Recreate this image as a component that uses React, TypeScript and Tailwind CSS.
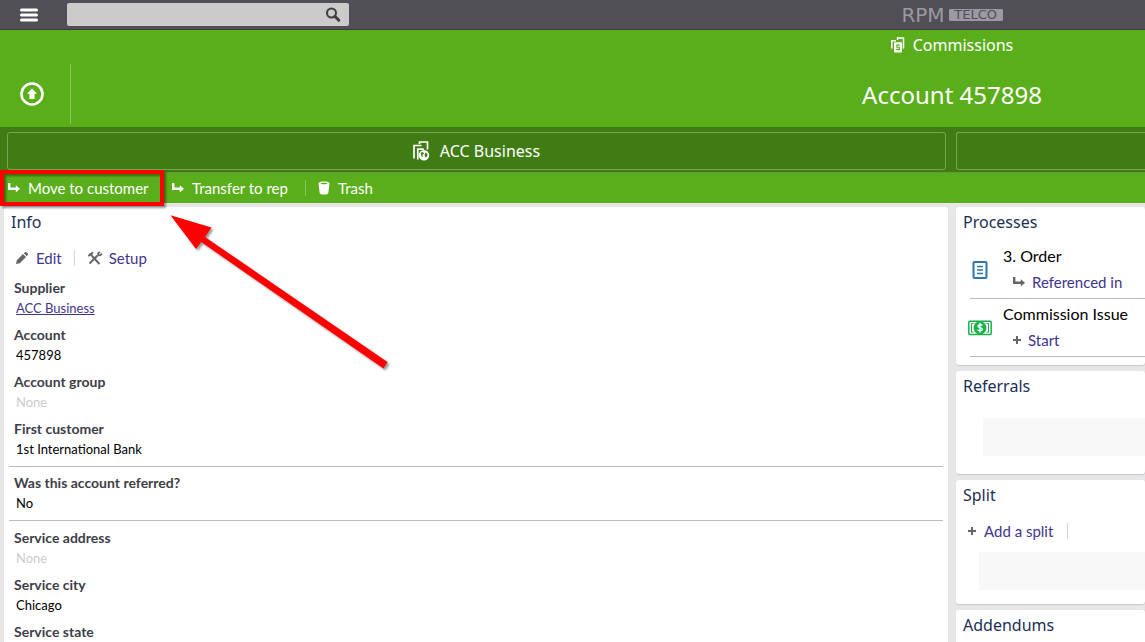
import type { ReactNode } from 'react';

const MenuIcon = () => (
	<svg viewBox="0 0 18 14" className="h-3.5 w-4.5" stroke="currentColor" strokeWidth="3" strokeLinecap="round">
		<path d="M1.5 2h15M1.5 7h15M1.5 12h15" />
	</svg>
);

const SearchIcon = () => (
	<svg viewBox="0 0 16 16" className="size-4" fill="none" stroke="currentColor">
		<circle cx="6.5" cy="6" r="4.5" strokeWidth="2" />
		<path d="M9.8 9.3l4 4" strokeWidth="3" strokeLinecap="round" />
	</svg>
);

const UpIcon = () => (
	<svg viewBox="0 0 24 24" className="size-6">
		<circle cx="12" cy="12" r="10.5" fill="none" stroke="currentColor" strokeWidth="2.6" />
		<path d="M12 6.5l5 5.2h-2.4V17H9.4v-5.3H7z" fill="currentColor" />
	</svg>
);

const CommissionsIcon = () => (
	<svg viewBox="0 0 14 16" className="h-4 w-3.5" fill="none" stroke="currentColor" strokeWidth="1.5">
		<path d="M.8 11.5V3.7H5M6.5 3V1h6v10.5" />
		<rect x="3" y="5.2" width="8" height="10.3" rx="1" fill="currentColor" stroke="none" />
		<path d="M8.8 8.2H5.8v2h2.6v2.2H5.2M7 7v1M7 12.5v1" className="stroke-[#5bae1b]" strokeWidth="1.1" />
	</svg>
);

const SupplierIcon = () => (
	<svg viewBox="0 0 17 20" className="h-5 w-[17px]" fill="none" stroke="currentColor" strokeWidth="1.7">
		<path d="M1 17.5V4.5h7.5M4.8 18.5V8.2h6M6.5 3V1h8v7.5" />
		<circle cx="11" cy="14.3" r="5.2" fill="currentColor" stroke="none" />
		<path d="M7.800 11.800l2.200-.8 1 1.700-1.600 1 .4 2.300-1.500-.8zM12.600 11.400l1.900 1.600-.6 2.700-1.700.6-.6-2.400z" className="fill-[#407b13]" stroke="none" />
	</svg>
);

const MoveIcon = () => (
	<svg viewBox="0 0 12 10" className="h-2.5 w-3 shrink-0" fill="currentColor">
		<path d="M0 0h2.4v4.6h5.4V2.2L12 5.8 7.8 9.4V7H0z" />
	</svg>
);

const TrashIcon = () => (
	<svg viewBox="0 0 12 14" className="h-3.5 w-3" fill="currentColor">
		<path fillRule="evenodd" d="M.5 2.5C.5 1 3 .4 6 .4s5.5.6 5.5 2.1L10.3 12c-.2 1-2 1.6-4.3 1.6S1.9 13 1.7 12zM2.2 2.5C2.8 3 4 3.3 6 3.3s3.2-.3 3.8-.8C9 2 7.8 1.7 6 1.7s-3 .3-3.8.8z" />
	</svg>
);

const PencilIcon = () => (
	<svg viewBox="0 0 12 12" className="size-3" fill="currentColor">
		<path d="M0 12l.8-3.800L7 2l3 3-6.200 6.200zM7.800 1.200L9 .2c.5-.4 1-.3 1.500.1l1.200 1.200c.5.5.5 1 .1 1.500l-1 1.200z" />
	</svg>
);

const ToolsIcon = () => (
	<svg viewBox="0 0 16 14" className="h-3.5 w-4" fill="none" stroke="currentColor">
		<path d="M2.5 12.5l8-8M5 5l7.5 8" strokeWidth="2" />
		<path d="M.8 4.800l1.500-2.300L6 .8l.8.8-1.600 1.600.8 1L4.500 5.500 3.200 4.600 2 5.800z" fill="currentColor" stroke="none" />
		<path d="M12.800.8l-1.700 1.600.2 1.800 1.800.2 1.800-1.700" strokeWidth="1.8" />
	</svg>
);

const PlusIcon = () => (
	<svg viewBox="0 0 8 8" className="size-2 shrink-0" stroke="currentColor" strokeWidth="2">
		<path d="M4 0v8M0 4h8" />
	</svg>
);

const FormIcon = () => (
	<svg viewBox="0 0 16 18" className="h-4.5 w-4 text-[#2f76ae]" fill="none" stroke="currentColor">
		<rect x="1.5" y="1" width="13" height="16" rx="1" strokeWidth="2" />
		<path d="M5 5.5h6M5 9h6M5 12.5h6" strokeWidth="1.5" />
	</svg>
);

const MoneyIcon = () => (
	<svg viewBox="0 0 24 16" className="h-4 w-6 text-[#19b04a]" fill="none" stroke="currentColor">
		<rect x=".8" y="1.2" width="22.4" height="13.3" rx="1" strokeWidth="1.5" />
		<path d="M5.5 3.5h-2v8.700h2M18.5 3.5h2v8.700h-2" strokeWidth="1" />
		<circle cx="12" cy="7.8" r="6.5" fill="currentColor" stroke="none" />
		<path d="M14.5 5.5c-1-1.200-4.600-1-4.600.7 0 2 4.500 1 4.500 3.100 0 1.700-3.500 1.900-4.900.5M12 2.800v10" stroke="#fff" strokeWidth="1.3" />
	</svg>
);

const Divider = ({ className = 'bg-gray-300' }: { className?: string }) => (
	<span className={`h-4 w-px ${className}`} />
);

type ActionProps = {
	icon: ReactNode;
	children: ReactNode;
	className?: string;
};

const Action = ({ icon, children, className = 'gap-2' }: ActionProps) => (
	<button
		type="button"
		className={`flex items-center text-[15px] leading-5 whitespace-nowrap text-[#42348c] ${className}`}
	>
		<span className="text-[#666]">{icon}</span>
		{children}
	</button>
);

type FieldProps = {
	label: string;
	value?: string;
	link?: boolean;
};

const Field = ({ label, value, link }: FieldProps) => (
	<div className="mb-[6px] px-[5px]">
		<dt className="h-5 text-[14px] leading-5 font-bold text-[#3e3e48]">{label}</dt>
		<dd className="h-[21px] px-[2px] text-[13px] leading-[21px]">
			{link ? (
				<a href="#supplier" className="text-[#42348c] underline">
					{value}
				</a>
			) : (
				(value ?? <span className="text-[#ccc]">None</span>)
			)}
		</dd>
	</div>
);

const Card = ({ title, className = '', children }: { title: string; className?: string; children?: ReactNode }) => (
	<section className={`rounded-[3px] bg-white pl-[7px] shadow-[0_1px_1px_#c8c8ca] ${className}`}>
		<h2 className="pt-[3px] font-['Noto_Sans'] text-[16px] leading-6 text-[#1a3057]">{title}</h2>
		{children}
	</section>
);

type ProcessProps = {
	icon: ReactNode;
	name: string;
	actionIcon: ReactNode;
	action: string;
};

const Process = ({ icon, name, actionIcon, action }: ProcessProps) => (
	<li className="ml-[7px] flex h-[58px] items-center border-b border-[#bbb]">
		<span className="-ml-1 flex w-7 justify-center">{icon}</span>
		<div className="ml-[9px]">
			<p className="text-[16px] leading-6">{name}</p>
			<Action icon={actionIcon} className="ml-[10px] h-[27px] gap-[7px]">
				{action}
			</Action>
		</div>
	</li>
);

const Callout = () => (
	<svg
		viewBox="0 0 220 156"
		className="pointer-events-none absolute top-[213px] left-[169px] h-[156px] w-[220px] drop-shadow-[2px_2px_1px_#0006]"
		fill="#f00"
	>
		<path d="M1.500 2.200L42.500 14.500 36 24 218.500 149 214.500 155.500 32.200 29 27 36z" />
	</svg>
);

const App = () => (
	<div className="relative flex h-screen flex-col overflow-hidden bg-[#e7e7e9] font-['Lato',sans-serif] text-black">
		<header className="grid h-[30px] shrink-0 grid-cols-[1fr_386px] items-center border-b border-[#3d3b42] bg-[#514f56]">
			<div className="flex items-center">
				<button type="button" aria-label="Menu" className="ml-5 text-white">
					<MenuIcon />
				</button>
				<label className="ml-[29px] flex h-[23px] w-[282px] items-center rounded-[2px] bg-[#cbcbcb] pr-2 text-[#3f3d44]">
					<input aria-label="Search" className="min-w-0 flex-1 bg-transparent px-2 text-sm outline-none" />
					<SearchIcon />
				</label>
			</div>
			<div className="flex items-center justify-center gap-1 text-[#9b99a1]">
				<span className="font-['DejaVu_Sans'] text-[20px] leading-4">RPM</span>
				<span className="flex h-3 w-[54px] items-center justify-center rounded-[1px] bg-[#9b99a1] font-['DejaVu_Sans'] text-[13px] leading-3 text-[#514f56]">
					TELCO
				</span>
			</div>
		</header>

		<div className="grid h-[97px] shrink-0 grid-cols-[71px_1fr_386px] bg-[#5bae1b] font-['Noto_Sans'] text-white">
			<div className="mt-[34px] flex h-[60px] items-center border-r border-[#8cc85d] pl-5">
				<button type="button" aria-label="Up">
					<UpIcon />
				</button>
			</div>
			<div />
			<div className="text-center">
				<a href="#commissions" className="flex h-[30px] items-center justify-center gap-2 text-[16px]">
					<CommissionsIcon />
					Commissions
				</a>
				<h1 className="mt-[17px] text-[24px] leading-9">Account 457898</h1>
			</div>
		</div>

		<nav className="grid h-[46px] shrink-0 grid-cols-[1fr_189px] gap-[10px] border-b border-[#63983d] bg-[#407b13] pt-[5px] pb-[2px] pl-[7px] font-['Noto_Sans'] text-[16px] text-white">
			<a href="#supplier" className="flex h-[38px] items-center justify-center gap-[10px] rounded-[3px] border border-[#75a654]">
				<SupplierIcon />
				ACC Business
			</a>
			<a href="#next" aria-label="Next" className="h-[38px] rounded-l-[3px] border border-r-0 border-[#75a654]" />
		</nav>

		<div className="flex h-[30px] shrink-0 items-center bg-[#5bae1b] pl-2 text-[15px] text-white">
			<button type="button" className="flex w-[144px] items-center gap-2">
				<MoveIcon />
				Move to customer
			</button>
			<button type="button" className="ml-5 flex w-[121px] items-center gap-2">
				<MoveIcon />
				Transfer to rep
			</button>
			<Divider className="mx-3 bg-[#8cc85d]" />
			<button type="button" className="flex items-center gap-2">
				<TrashIcon />
				Trash
			</button>
		</div>

		<main className="grid min-h-0 flex-1 grid-cols-[1fr_189px] gap-2 pt-1 pl-1">
			<Card title="Info" className="pr-[5px]">
				<div className="mt-[14px] mb-[10px] flex h-5 items-center gap-3 pl-[5px]">
					<Action icon={<PencilIcon />}>Edit</Action>
					<Divider />
					<Action icon={<ToolsIcon />} className="gap-[6px]">
						Setup
					</Action>
				</div>
				<dl className="-ml-[2px]">
					<Field label="Supplier" value="ACC Business" link />
					<Field label="Account" value="457898" />
					<Field label="Account group" />
					<Field label="First customer" value="1st International Bank" />
					<div className="mb-[7px] border-y border-[#bbb] pt-[6px]">
						<Field label="Was this account referred?" value="No" />
					</div>
					<Field label="Service address" />
					<Field label="Service city" value="Chicago" />
					<Field label="Service state" />
				</dl>
			</Card>

			<aside className="flex flex-col gap-[6px]">
				<Card title="Processes" className="h-[158px] shrink-0">
					<ul className="mt-[7px]">
						<Process icon={<FormIcon />} name="3. Order" actionIcon={<MoveIcon />} action="Referenced in" />
						<Process icon={<MoneyIcon />} name="Commission Issue" actionIcon={<PlusIcon />} action="Start" />
					</ul>
				</Card>
				<Card title="Referrals" className="h-[103px] shrink-0">
					<div className="mt-5 ml-5 h-[38px] bg-[#f8f8f8]" />
				</Card>
				<Card title="Split" className="h-[124px] shrink-0">
					<div className="mt-[14px] flex h-5 items-center gap-[14px] pl-[5px]">
						<Action icon={<PlusIcon />}>Add a split</Action>
						<Divider />
					</div>
					<div className="mt-[11px] ml-4 h-[38px] bg-[#f8f8f8]" />
				</Card>
				<Card title="Addendums" className="h-[80px] shrink-0" />
			</aside>
		</main>

		<div className="pointer-events-none absolute top-[170px] left-0 h-9 w-[164px] border-4 border-[#f00] drop-shadow-[2px_2px_1px_#0006]" />
		<Callout />
	</div>
);

export default App;
